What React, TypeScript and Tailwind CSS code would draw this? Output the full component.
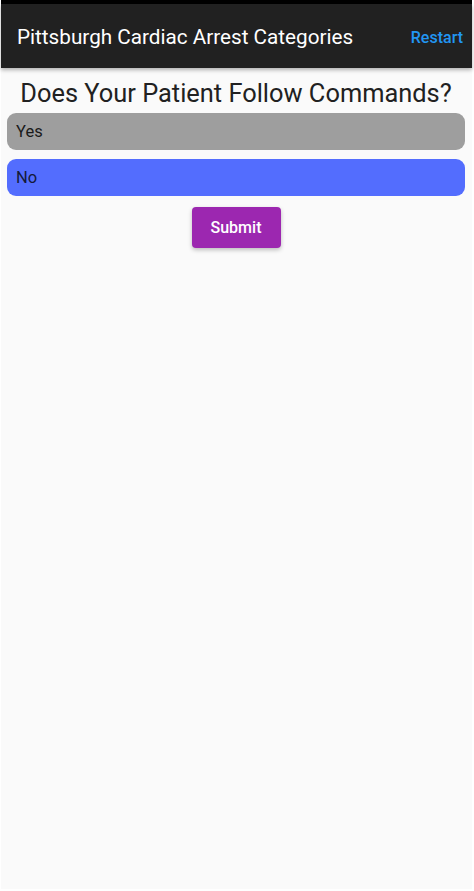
import { useState } from 'react'

const options = ['Yes', 'No']

function App() {
  const [selected, setSelected] = useState('No')

  return (
    <div className="min-h-[891px] bg-white pb-[2px] pl-px pr-[2px] font-['Roboto',sans-serif]">
      <div className="h-[4px] bg-black" />
      <div className="flex min-h-[885px] flex-col bg-[#fafafa]">
        <header className="flex h-[64px] items-center justify-between bg-[#212121] pl-[16px] pr-[9px] pt-[3px] shadow-[0_2px_4px_rgba(0,0,0,0.3)]">
          <h1 className="text-[20.7px] text-white">Pittsburgh Cardiac Arrest Categories</h1>
          <button className="text-[16px] font-medium text-[#2196f3]">Restart</button>
        </header>
        <main className="flex flex-col pl-[6px] pr-[7px]">
          <h2 className="mt-[10px] text-center text-[25.4px] leading-[30px] text-[#212121]">
            Does Your Patient Follow Commands?
          </h2>
          <div className="mt-[5px] flex flex-col gap-[9px]">
            {options.map((o) => (
              <button
                key={o}
                onClick={() => setSelected(o)}
                className={
                  selected === o
                    ? 'flex h-[37px] items-center rounded-[9px] bg-[#536dfe] px-[9px] pt-[2px] text-left text-[16.5px] text-[#141a3a]'
                    : 'flex h-[37px] items-center rounded-[9px] bg-[#9e9e9e] px-[9px] pt-[2px] text-left text-[16.5px] text-[#1a1a1a]'
                }
              >
                {o}
              </button>
            ))}
          </div>
          <div className="mt-[11px] flex justify-center">
            <button className="h-[41px] w-[89px] rounded-[4px] bg-[#9c27b0] text-[16px] font-medium text-white shadow-[0_2px_4px_rgba(0,0,0,0.25)]">
              Submit
            </button>
          </div>
        </main>
      </div>
    </div>
  )
}

export default App
